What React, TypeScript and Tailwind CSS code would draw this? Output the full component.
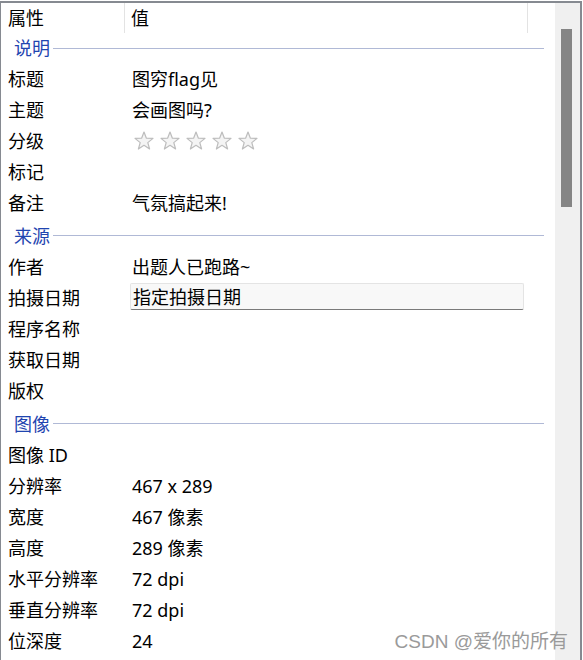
import React from "react";

const font = { fontFamily: '"Noto Sans", "Noto Sans CJK SC", sans-serif' };

function Star() {
  return (
    <svg width="20" height="19" viewBox="0 0 20 19" className="mr-[6px]">
      <polygon
        points="10,1 12.4,7.2 19,7.4 13.8,11.6 15.6,18 10,14.3 4.4,18 6.2,11.6 1,7.4 7.6,7.2"
        fill="#f4f4f4"
        stroke="#bdbdbd"
        strokeWidth="1.2"
        strokeLinejoin="round"
      />
    </svg>
  );
}

function Row({ label, value, children }: { label: string; value?: string; children?: React.ReactNode }) {
  return (
    <div className="flex h-[31px] items-center">
      <div className="w-[124px] pl-[7px] whitespace-nowrap">{label}</div>
      <div className="flex-1 pl-[7px] whitespace-nowrap flex items-center">{children ?? value}</div>
    </div>
  );
}

function Group({ title, first }: { title: string; first?: boolean }) {
  return (
    <div className={first ? "flex h-[30px] items-center pl-[13px] pr-[11px]" : "flex h-[33px] items-center pt-[2px] pl-[13px] pr-[11px]"}>
      <span className="text-[#1f45b0]">{title}</span>
      <div className="flex-1 h-px bg-[#b0b9d6] ml-[3px]" />
    </div>
  );
}

export default function App() {
  return (
    <div className="relative w-[583px] h-[660px] bg-white overflow-hidden text-[18px] text-black leading-none" style={font}>
      <div className="absolute left-0 top-[1px] w-[582px] h-[660px] border-l border-t-2 border-r-2 border-[#868a91] flex">
        <div className="flex-1 flex flex-col">
          <div className="flex h-[30px] items-center">
            <div className="w-[124px] h-full flex items-center pl-[7px] border-r border-[#e3e3e3]">属性</div>
            <div className="w-[403px] h-full flex items-center pl-[6px] border-r border-[#e3e3e3]">值</div>
          </div>
          <Group title="说明" first />
          <Row label="标题" value="图穷flag见" />
          <Row label="主题" value="会画图吗?" />
          <Row label="分级">
            <div className="flex items-center ml-[2px]">
              <Star />
              <Star />
              <Star />
              <Star />
              <Star />
            </div>
          </Row>
          <Row label="标记" value="" />
          <Row label="备注" value="气氛搞起来!" />
          <Group title="来源" />
          <Row label="作者" value="出题人已跑路~" />
          <div className="flex h-[31px] items-center">
            <div className="w-[124px] pl-[7px] whitespace-nowrap">拍摄日期</div>
            <div className="ml-[5px] mb-[2px] w-[394px] h-[27px] flex items-center pl-[2px] bg-[#f8f8f8] border border-[#e4e4e4] border-b-[#7a7a7a] rounded-[2px]">
              指定拍摄日期
            </div>
          </div>
          <Row label="程序名称" value="" />
          <Row label="获取日期" value="" />
          <Row label="版权" value="" />
          <Group title="图像" />
          <Row label="图像 ID" value="" />
          <Row label="分辨率" value="467 x 289" />
          <Row label="宽度" value="467 像素" />
          <Row label="高度" value="289 像素" />
          <Row label="水平分辨率" value="72 dpi" />
          <Row label="垂直分辨率" value="72 dpi" />
          <Row label="位深度" value="24" />
        </div>
        <div className="w-[25px] bg-[#f0f0f0] pt-[26px] flex justify-center">
          <div className="w-[11px] h-[178px] bg-[#858585] ml-[-3px]" />
        </div>
      </div>
      <div className="absolute right-[15px] bottom-[9px] text-[19px] text-[#9a9a9a]" style={{ fontFamily: '"Liberation Sans", "Noto Sans CJK SC", sans-serif' }}>
        CSDN @爱你的所有
      </div>
    </div>
  );
}
